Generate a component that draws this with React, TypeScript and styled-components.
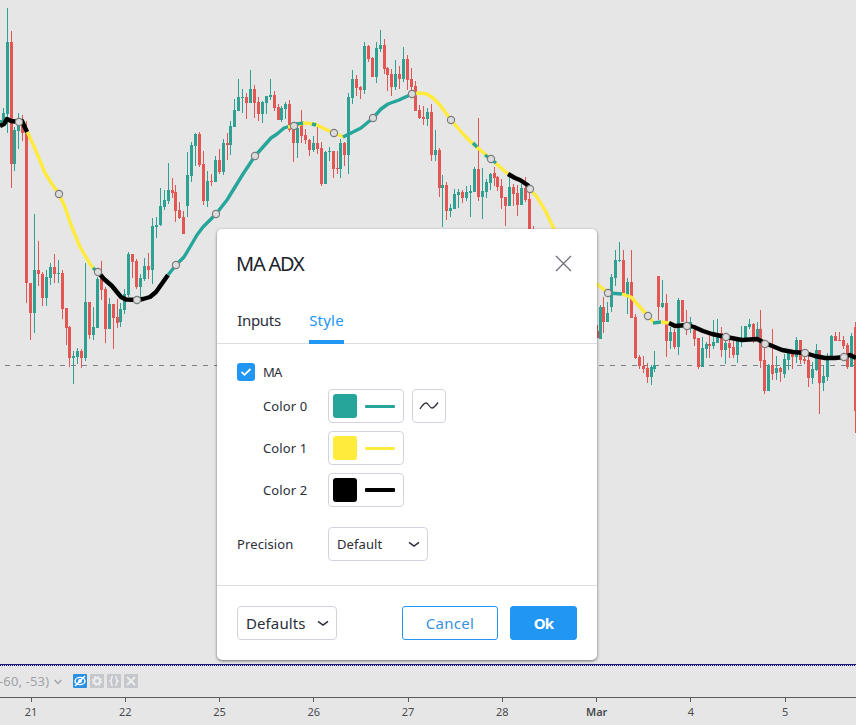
import React from "react";
import styled, { createGlobalStyle } from "styled-components";

const TEAL = "#26a69a";
const CANDLE_UP = "#2fa193";
const CANDLE_DOWN = "#e25654";
const YELLOW = "#ffeb3b";
const BLUE = "#2196f3";
const INK = "#2a2e39";

const GlobalStyle = createGlobalStyle`
  * { box-sizing: border-box; }
  body {
    margin: 0;
    background: #e6e6e6;
    font-family: "Noto Sans", "Open Sans", sans-serif;
    color: ${INK};
    overflow: hidden;
  }
  button { font-family: inherit; margin: 0; padding: 0; }
`;

/* x, high, body top, body bottom, low, direction (1 = up, 0 = down) */
const candles: number[][] = [
  [0, 120, 120, 125, 125, 1], [3, 108, 113, 122, 122, 1], [7, 8, 42, 114, 133, 1], [11, 31, 42, 164, 188, 0],
  [14, 127, 130, 164, 171, 1], [18, 113, 122, 131, 149, 1], [22, 115, 122, 133, 141, 0], [26, 121, 131, 283, 303, 0],
  [30, 283, 283, 313, 340, 0], [34, 214, 270, 313, 333, 1], [38, 241, 270, 274, 286, 0], [42, 272, 274, 298, 306, 0],
  [46, 270, 277, 298, 306, 1], [50, 263, 267, 278, 285, 1], [54, 254, 267, 274, 283, 0], [58, 260, 273, 274, 283, 1],
  [62, 270, 273, 309, 319, 0], [66, 308, 308, 328, 345, 0], [69, 326, 327, 358, 367, 0], [73, 351, 356, 358, 384, 1],
  [77, 348, 351, 357, 364, 1], [81, 349, 351, 358, 368, 0], [85, 263, 302, 358, 361, 1], [89, 302, 302, 335, 339, 0],
  [93, 307, 327, 335, 340, 1], [97, 277, 279, 328, 328, 1], [101, 261, 274, 290, 300, 0], [105, 287, 289, 329, 343, 0],
  [109, 298, 304, 329, 329, 1], [113, 304, 304, 318, 349, 0], [117, 299, 317, 323, 328, 0], [120, 303, 309, 322, 327, 1],
  [124, 289, 294, 310, 314, 1], [128, 252, 254, 295, 297, 1], [132, 254, 254, 262, 278, 0], [136, 259, 261, 287, 289, 0],
  [140, 274, 278, 287, 297, 1], [144, 258, 266, 279, 281, 1], [148, 253, 266, 270, 279, 0], [152, 218, 226, 270, 284, 1],
  [156, 217, 225, 227, 238, 1], [160, 188, 206, 225, 226, 1], [164, 190, 200, 207, 210, 1], [168, 163, 190, 201, 204, 1],
  [172, 178, 190, 193, 198, 0], [175, 185, 192, 211, 222, 0], [179, 202, 210, 218, 219, 0], [183, 211, 217, 234, 234, 0],
  [187, 152, 175, 206, 217, 1], [191, 142, 145, 176, 182, 1], [195, 133, 134, 146, 166, 1], [199, 132, 134, 165, 167, 0],
  [203, 151, 164, 201, 205, 0], [207, 171, 181, 201, 207, 1], [211, 174, 181, 182, 186, 0], [215, 156, 160, 182, 182, 1],
  [219, 149, 160, 172, 174, 0], [223, 139, 143, 172, 175, 1], [227, 133, 143, 145, 160, 0], [230, 121, 126, 145, 155, 1],
  [234, 99, 110, 127, 127, 1], [238, 79, 97, 111, 111, 1], [242, 89, 97, 98, 113, 1], [246, 93, 97, 103, 119, 0],
  [250, 70, 89, 103, 103, 1], [254, 85, 89, 103, 118, 0], [258, 97, 102, 114, 121, 0], [262, 101, 102, 114, 123, 1],
  [266, 96, 96, 103, 114, 1], [270, 79, 95, 97, 100, 1], [274, 91, 95, 108, 111, 0], [278, 104, 107, 120, 120, 0],
  [281, 106, 108, 120, 122, 1], [285, 102, 104, 109, 119, 1], [289, 100, 104, 130, 132, 0], [293, 128, 129, 143, 162, 0],
  [297, 127, 128, 143, 158, 1], [301, 110, 123, 136, 143, 0], [305, 129, 135, 140, 144, 0], [309, 139, 140, 150, 156, 0],
  [313, 136, 143, 150, 152, 1], [317, 127, 143, 149, 154, 0], [321, 142, 148, 184, 186, 0], [325, 151, 152, 184, 184, 1],
  [329, 147, 151, 152, 161, 1], [333, 151, 151, 169, 178, 0], [337, 151, 168, 169, 174, 0], [340, 139, 143, 169, 178, 1],
  [344, 142, 143, 155, 166, 0], [348, 93, 97, 155, 174, 1], [352, 70, 79, 98, 104, 1], [356, 75, 79, 88, 96, 0],
  [360, 86, 87, 90, 99, 0], [364, 42, 46, 90, 94, 1], [368, 45, 46, 59, 62, 0], [372, 57, 58, 77, 77, 0],
  [376, 42, 48, 77, 83, 1], [380, 30, 45, 49, 52, 1], [384, 39, 45, 69, 74, 0], [387, 67, 68, 75, 91, 0],
  [391, 69, 74, 87, 96, 0], [395, 60, 74, 87, 90, 1], [399, 66, 74, 79, 89, 0], [403, 47, 59, 79, 82, 1],
  [407, 55, 59, 80, 90, 0], [411, 68, 79, 87, 94, 0], [415, 81, 86, 111, 111, 0], [419, 105, 110, 118, 119, 0],
  [423, 106, 117, 119, 125, 0], [427, 108, 112, 119, 126, 1], [431, 104, 112, 155, 161, 0], [435, 130, 150, 155, 161, 1],
  [439, 148, 150, 188, 197, 0], [442, 175, 185, 188, 227, 1], [446, 182, 185, 211, 220, 0], [450, 204, 208, 211, 217, 1],
  [454, 189, 194, 209, 209, 1], [458, 189, 192, 195, 208, 1], [462, 190, 192, 198, 203, 0], [466, 186, 192, 198, 201, 1],
  [470, 185, 191, 193, 217, 1], [474, 167, 169, 192, 192, 1], [478, 118, 169, 197, 201, 0], [482, 168, 191, 197, 219, 1],
  [486, 179, 182, 192, 198, 1], [490, 173, 174, 183, 190, 1], [494, 167, 173, 178, 186, 0], [497, 176, 177, 187, 191, 0],
  [501, 179, 186, 198, 209, 0], [505, 197, 197, 206, 226, 0], [509, 175, 187, 206, 206, 1], [513, 184, 187, 194, 206, 0],
  [517, 185, 193, 205, 216, 0], [521, 184, 188, 205, 205, 1], [525, 177, 188, 200, 202, 0], [529, 187, 199, 235, 235, 0],
  [533, 226, 232, 236, 236, 0], [597, 325, 331, 338, 338, 0], [600, 305, 307, 339, 339, 1], [603, 297, 307, 322, 333, 0],
  [607, 302, 313, 322, 322, 1], [611, 274, 277, 307, 312, 1], [615, 250, 260, 278, 286, 1], [619, 242, 260, 261, 262, 1],
  [623, 250, 260, 293, 295, 0], [627, 278, 282, 296, 314, 1], [631, 250, 282, 318, 318, 0], [635, 314, 317, 358, 359, 0],
  [639, 355, 357, 366, 369, 0], [643, 356, 366, 369, 373, 0], [647, 363, 368, 377, 383, 0], [651, 365, 367, 377, 385, 1],
  [654, 351, 365, 369, 372, 1], [658, 276, 276, 307, 320, 0], [662, 280, 303, 307, 308, 1], [666, 294, 303, 341, 357, 0],
  [670, 327, 332, 341, 349, 1], [674, 329, 332, 347, 349, 0], [678, 298, 300, 347, 355, 1], [682, 300, 300, 322, 322, 0],
  [686, 310, 322, 329, 335, 0], [690, 317, 322, 326, 333, 1], [694, 327, 330, 339, 346, 0], [698, 338, 338, 367, 369, 0],
  [702, 337, 348, 367, 367, 1], [706, 342, 344, 349, 358, 1], [709, 335, 344, 346, 358, 0], [713, 320, 342, 346, 349, 1],
  [717, 319, 337, 343, 343, 1], [721, 327, 333, 350, 357, 0], [725, 340, 343, 350, 364, 1], [729, 337, 343, 348, 358, 0],
  [733, 341, 347, 355, 358, 0], [737, 337, 341, 355, 363, 1], [741, 326, 338, 342, 347, 1], [745, 326, 326, 341, 341, 1],
  [749, 319, 324, 327, 329, 1], [753, 323, 324, 340, 343, 0], [757, 322, 329, 340, 340, 1], [760, 310, 329, 361, 368, 0],
  [764, 345, 360, 391, 394, 0], [768, 364, 365, 391, 391, 1], [772, 329, 365, 374, 380, 0], [776, 356, 368, 373, 380, 1],
  [780, 367, 368, 372, 382, 0], [784, 354, 359, 374, 378, 1], [788, 350, 352, 360, 370, 1], [792, 350, 352, 357, 369, 0],
  [796, 337, 340, 357, 363, 1], [800, 340, 340, 360, 364, 0], [804, 354, 359, 361, 364, 0], [808, 356, 360, 378, 387, 0],
  [812, 362, 369, 378, 384, 1], [816, 344, 350, 370, 371, 1], [819, 350, 350, 383, 414, 0], [823, 365, 376, 383, 391, 1],
  [827, 353, 357, 377, 381, 1], [831, 335, 336, 357, 357, 1], [835, 332, 336, 341, 341, 0], [839, 332, 340, 341, 341, 0],
  [843, 336, 340, 346, 349, 0], [847, 343, 345, 367, 369, 0], [851, 333, 336, 367, 367, 1], [855, 322, 327, 411, 433, 0],
];

const segments: { color: string; width: number; points: string }[] = [
  { color: YELLOW, width: 3.4, points: "27,131 36,151 45,173 52,184 59,194 65,207 71,225 80,247 90,264 95,270" },
  { color: TEAL, width: 3.4, points: "93,268 98,272" },
  { color: "#000", width: 4.4, points: "0,126 4,124 7,119 11,121 19,122 22,121 27,132" },
  { color: "#000", width: 4.4, points: "98,272 104,279 112,286 121,297 126,299.5 137,300 143,299 150,297 156,292 168,275" },
  { color: TEAL, width: 3.4, points: "168,275 176,265 184,257 190,247 197,235 203,227 216,214 227,200 243,174 255,156 271,138 277,134 284,128 290,126" },
  { color: YELLOW, width: 3.4, points: "288,127 294,126 304,123" },
  { color: TEAL, width: 3.4, points: "296,124 304,123" },
  { color: YELLOW, width: 3.4, points: "303,123 315,124 325,129 334,133 344,137" },
  { color: TEAL, width: 3.4, points: "312,124 316,125" },
  { color: TEAL, width: 3.4, points: "343,137 351,133 361,128 373,118 381,109 388,104 399,100 412,94" },
  { color: YELLOW, width: 3.4, points: "412,94 420,93 427,94 433,98 440,105 451,120 463,134 473,144 491,159 508,174" },
  { color: TEAL, width: 3.4, points: "473,143 477,147" },
  { color: TEAL, width: 3.4, points: "485,155 496,163" },
  { color: "#000", width: 4.4, points: "508,174 515,178 520,180 529,186" },
  { color: YELLOW, width: 3.4, points: "530,189 537,197 546,212 554,229 575,260 597,284 608,293" },
  { color: TEAL, width: 3.4, points: "608,293 622,294" },
  { color: YELLOW, width: 3.4, points: "622,294 631,297 648,316 654,323" },
  { color: TEAL, width: 3.4, points: "653,323 661,322" },
  { color: YELLOW, width: 3.4, points: "661,322 669,323" },
  { color: "#000", width: 4.4, points: "669,323 675,326 687,325 694,327 703,331 712,334 726,337 742,340 757,339 765,343 782,350 793,352 805,353 815,356 825,358 835,358 844,357 850,355 856,358" },
];

const anchors: number[][] = [
  [19, 122], [59, 194], [98, 272], [137, 300], [176, 265], [216, 214], [255, 156], [294, 126], [334, 133], [373, 118],
  [412, 94], [451, 120], [491, 159], [530, 189], [608, 293], [648, 316], [687, 326], [726, 337], [765, 344], [805, 353], [844, 357],
];

const Page = styled.main`
  position: relative;
  display: flex;
  flex-direction: column;
  width: 856px;
  height: 725px;
  overflow: hidden;
  background: #e6e6e6;
`;

const ChartPane = styled.section`
  height: 664px;
  flex: none;
`;

const ChartSvg = styled.svg`
  display: block;
`;

const PaneSeparator = styled.div`
  height: 2px;
  flex: none;
  background: repeating-linear-gradient(90deg, #14147c 0 1px, #d4d4ec 1px 2px);
  border-top: 1px solid #1a1a78;
`;

const LegendRow = styled.div`
  display: flex;
  align-items: center;
  height: 32px;
  flex: none;
  padding-bottom: 1px;
  border-bottom: 1px solid #5a5a5e;
  color: #a0a2a8;
`;

const LegendText = styled.span`
  width: 51px;
  flex: none;
  margin-left: -1px;
  font-size: 13px;
  letter-spacing: 0.15px;
  white-space: nowrap;
`;

const LegendChevron = styled.svg`
  margin: 1px 11px 0 4px;
`;

const LegendActions = styled.div`
  display: flex;
  gap: 3px;
`;

const LegendButton = styled.span<{ $active?: boolean }>`
  display: flex;
  width: 14px;
  height: 14px;
  border-radius: 1px;
  background: ${(p) => (p.$active ? "#2a90e4" : "#c5c7cc")};
`;

const TimeAxis = styled.div`
  display: grid;
  grid-template-columns: repeat(9, 94.25px);
  margin-left: -16px;
`;

const Tick = styled.div<{ $strong?: boolean }>`
  display: flex;
  flex-direction: column;
  align-items: center;
  font-size: 11px;
  line-height: 18px;
  color: #4a4b50;
  font-weight: ${(p) => (p.$strong ? 600 : 400)};

  &::before {
    content: "";
    width: 1px;
    height: 4px;
    margin-bottom: 1px;
    background: #5a5a5e;
  }
`;

const Dialog = styled.section`
  position: absolute;
  left: 217px;
  top: 229px;
  display: flex;
  flex-direction: column;
  width: 380px;
  height: 431px;
  background: #fff;
  border-radius: 5px;
  box-shadow: 0 1px 3px rgba(0, 0, 0, 0.55);
`;

const DialogHeader = styled.header`
  display: flex;
  align-items: center;
  justify-content: space-between;
  height: 69px;
  padding: 0 25px 0 19px;
`;

const Title = styled.h1`
  margin: 0;
  font-size: 20px;
  font-weight: 400;
  letter-spacing: -1.2px;
  color: #20232c;
`;

const CloseButton = styled.button`
  display: flex;
  border: 0;
  background: none;
`;

const Tabs = styled.nav`
  display: flex;
  gap: 28px;
  height: 46px;
  padding: 0 20px;
  border-bottom: 1px solid #dcdee3;
`;

const Tab = styled.button<{ $active?: boolean; $width: number }>`
  display: flex;
  justify-content: center;
  align-items: center;
  width: ${(p) => p.$width}px;
  height: 46px;
  padding-top: 2px;
  border: 0;
  border-bottom: 4px solid ${(p) => (p.$active ? BLUE : "transparent")};
  background: none;
  font-size: 15px;
  letter-spacing: ${(p) => (p.$active ? 0.2 : -0.3)}px;
  white-space: nowrap;
  color: ${(p) => (p.$active ? BLUE : INK)};
`;

const DialogBody = styled.div`
  display: flex;
  flex-direction: column;
  height: 241px;
  padding: 19px 20px 0;
  font-size: 13px;
`;

const CheckRow = styled.label`
  display: flex;
  align-items: center;
  gap: 8px;
  height: 18px;
  margin-bottom: 8px;
  letter-spacing: -0.9px;
`;

const Checkbox = styled.span`
  display: flex;
  align-items: center;
  justify-content: center;
  width: 18px;
  height: 18px;
  border-radius: 3px;
  background: ${BLUE};
`;

const FieldRow = styled.div<{ $indent?: boolean }>`
  display: grid;
  grid-template-columns: ${(p) => (p.$indent ? 65 : 91)}px auto auto;
  justify-content: start;
  align-items: center;
  height: 34px;
  margin-bottom: ${(p) => (p.$indent ? 8 : 0)}px;
  margin-top: ${(p) => (p.$indent ? 0 : 12)}px;
  padding-left: ${(p) => (p.$indent ? 26 : 0)}px;
  letter-spacing: 0.12px;
`;

const ColorButton = styled.button`
  display: flex;
  align-items: center;
  gap: 8px;
  width: 76px;
  height: 34px;
  padding-left: 4px;
  border: 1px solid #d1d4dc;
  border-radius: 4px;
  background: #fff;
`;

const Swatch = styled.span<{ $color: string }>`
  width: 24px;
  height: 24px;
  border-radius: 3px;
  background: ${(p) => p.$color};
`;

const LineSample = styled.span<{ $color: string; $thickness: number }>`
  width: 30px;
  height: ${(p) => p.$thickness}px;
  border-radius: 1px;
  background: ${(p) => p.$color};
`;

const LineTypeButton = styled.button`
  display: flex;
  align-items: center;
  justify-content: center;
  width: 34px;
  height: 34px;
  margin-left: 8px;
  border: 1px solid #d1d4dc;
  border-radius: 4px;
  background: #fff;
`;

const Select = styled.button<{ $size: number }>`
  display: flex;
  align-items: center;
  justify-content: space-between;
  width: 100px;
  height: 34px;
  padding: 0 7px 0 8px;
  border: 1px solid #d1d4dc;
  border-radius: 4px;
  background: #fff;
  font-size: ${(p) => p.$size}px;
  letter-spacing: 0.1px;
  color: ${INK};
`;

const DialogFooter = styled.footer`
  display: flex;
  align-items: flex-start;
  height: 75px;
  padding: 20px;
  border-top: 1px solid #dcdee3;
`;

const ActionButton = styled.button<{ $primary?: boolean }>`
  width: ${(p) => (p.$primary ? 67 : 96)}px;
  height: 34px;
  margin-left: ${(p) => (p.$primary ? "12px" : "auto")};
  border: 1px solid ${BLUE};
  border-radius: 3px;
  background: ${(p) => (p.$primary ? BLUE : "#fff")};
  color: ${(p) => (p.$primary ? "#fff" : "#3792de")};
  font-size: 15px;
  letter-spacing: ${(p) => (p.$primary ? -0.8 : 0.3)}px;
  font-weight: ${(p) => (p.$primary ? 700 : 400)};
`;

const Chevron = () => (
  <svg width="12" height="8" viewBox="0 0 12 8" fill="none" stroke={INK} strokeWidth="1.5">
    <path d="M1 2.3 6 6 11 2.3" />
  </svg>
);

const Chart = () => (
  <ChartSvg width="856" height="664" viewBox="0 0 856 664">
    <line x1="5" y1="365.5" x2="856" y2="365.5" stroke="#7d8288" strokeDasharray="5 6" />
    {candles.map(([x, high, top, bottom, low, up]) => (
      <g key={x} fill={up ? CANDLE_UP : CANDLE_DOWN}>
        <rect x={x} y={high} width="1" height={low - high} />
        <rect x={x - 1} y={top} width="3" height={Math.max(1, bottom - top)} />
      </g>
    ))}
    {segments.map((s) => (
      <polyline key={s.points} points={s.points} fill="none" stroke={s.color} strokeWidth={s.width} strokeLinejoin="round" />
    ))}
    {anchors.map(([x, y]) => (
      <circle key={x} cx={x} cy={y} r="3.6" fill="#dcdcdc" stroke="#7c7c7c" strokeWidth="1.2" />
    ))}
  </ChartSvg>
);

const plots = [
  { label: "Color 0", color: TEAL, thickness: 3 },
  { label: "Color 1", color: YELLOW, thickness: 3 },
  { label: "Color 2", color: "#000", thickness: 4 },
];

const dates = ["21", "22", "25", "26", "27", "28", "Mar", "4", "5"];

export default function App() {
  return (
    <Page>
      <GlobalStyle />
      <ChartPane>
        <Chart />
      </ChartPane>
      <PaneSeparator />
      <LegendRow>
        <LegendText>-60, -53)</LegendText>
        <LegendChevron width="8" height="6" viewBox="0 0 8 6" fill="none" stroke="#a0a2a8" strokeWidth="1.4">
          <path d="M.7 1 4 4.4 7.3 1" />
        </LegendChevron>
        <LegendActions>
          <LegendButton $active>
            <svg width="14" height="14" viewBox="0 0 14 14" fill="none" stroke="#fff" strokeWidth="1.4">
              <ellipse cx="7" cy="7" rx="5" ry="3.6" />
              <circle cx="7" cy="7" r="1.2" />
              <path d="M2 12 12 2" />
            </svg>
          </LegendButton>
          <LegendButton>
            <svg width="14" height="14" viewBox="0 0 14 14" fill="none" stroke="#eee">
              <circle cx="7" cy="7" r="3" strokeWidth="2" />
              <circle cx="7" cy="7" r="4.4" strokeWidth="1.4" strokeDasharray="1.7 1.75" />
            </svg>
          </LegendButton>
          <LegendButton>
            <svg width="14" height="14" viewBox="0 0 14 14" fill="none" stroke="#eee" strokeWidth="1.5">
              <path d="M5.800 2.500C3.800 2.500 4.700 5.500 4.200 6.200L3 7l1.200.8c.5.7-.4 3.700 1.600 3.700M8.200 2.500c2 0 1.100 3 1.600 3.700L11 7l-1.200.8c-.5.7.4 3.700-1.600 3.700" />
            </svg>
          </LegendButton>
          <LegendButton>
            <svg width="14" height="14" viewBox="0 0 14 14" fill="none" stroke="#eee" strokeWidth="1.8">
              <path d="m3 3 8 8M11 3l-8 8" />
            </svg>
          </LegendButton>
        </LegendActions>
      </LegendRow>
      <TimeAxis>
        {dates.map((d) => (
          <Tick key={d} $strong={d === "Mar"}>{d}</Tick>
        ))}
      </TimeAxis>

      <Dialog>
        <DialogHeader>
          <Title>MA ADX</Title>
          <CloseButton aria-label="Close">
            <svg width="17" height="17" viewBox="0 0 17 17" fill="none" stroke="#6a6d78" strokeWidth="1.2">
              <path d="m1 1 15 15M16 1 1 16" />
            </svg>
          </CloseButton>
        </DialogHeader>
        <Tabs>
          <Tab $width={44}>Inputs</Tab>
          <Tab $active $width={35}>Style</Tab>
        </Tabs>
        <DialogBody>
          <CheckRow>
            <Checkbox>
              <svg width="12" height="10" viewBox="0 0 12 10" fill="none" stroke="#fff" strokeWidth="1.8">
                <path d="m1.500 4.800 3 3L10.500 2" />
              </svg>
            </Checkbox>
            MA
          </CheckRow>
          {plots.map((p, i) => (
            <FieldRow key={p.label} $indent>
              <span>{p.label}</span>
              <ColorButton>
                <Swatch $color={p.color} />
                <LineSample $color={p.color} $thickness={p.thickness} />
              </ColorButton>
              {i === 0 && (
                <LineTypeButton aria-label="Line type">
                  <svg width="20" height="10" viewBox="0 0 20 10" fill="none" stroke={INK} strokeWidth="1.3">
                    <path d="M1 7.800C3.500 4 5 2 7 2c2.500 0 3.500 5 6 5 2 0 3.500-2 6-5.500" />
                  </svg>
                </LineTypeButton>
              )}
            </FieldRow>
          ))}
          <FieldRow>
            <span>Precision</span>
            <Select $size={13}>
              Default
              <Chevron />
            </Select>
          </FieldRow>
        </DialogBody>
        <DialogFooter>
          <Select $size={15}>
            Defaults
            <Chevron />
          </Select>
          <ActionButton>Cancel</ActionButton>
          <ActionButton $primary>Ok</ActionButton>
        </DialogFooter>
      </Dialog>
    </Page>
  );
}
